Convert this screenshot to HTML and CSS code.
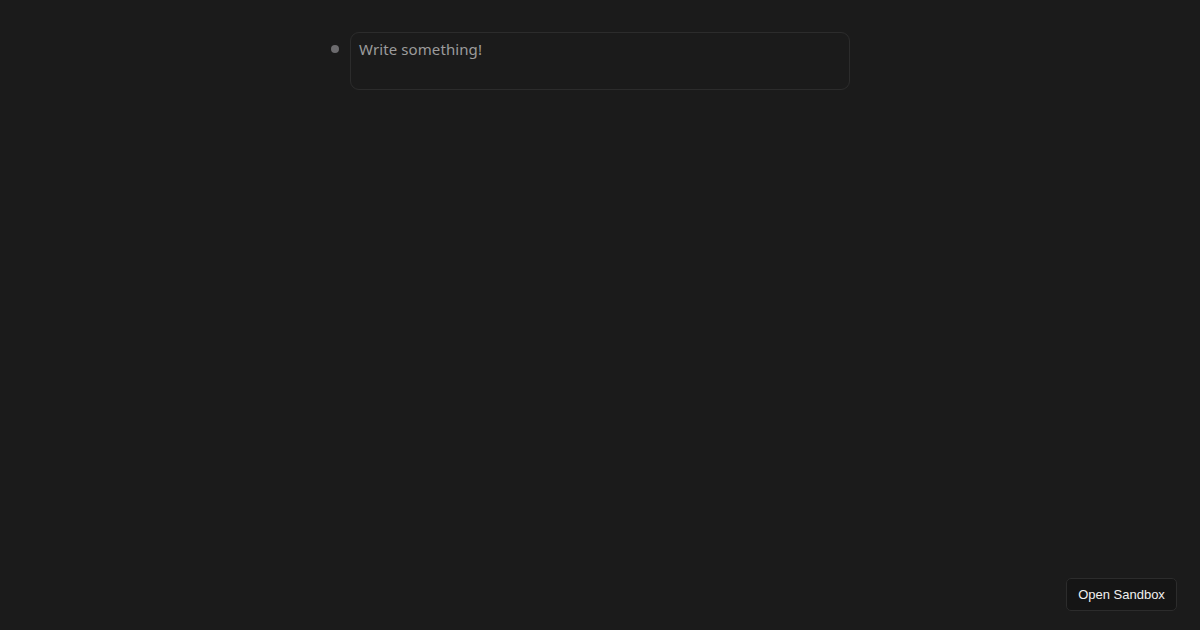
FILE: index.html
```html
<!DOCTYPE html>
<html>
<head>
<meta charset="utf-8">
<link rel="stylesheet" href="styles.css">
</head>
<body>
<main class="page">
  <div class="editor">
    <ul class="list">
      <li class="item">
        <span class="bullet"></span>
        <div class="block">Write something!</div>
      </li>
    </ul>
  </div>
</main>
<button class="sandbox">Open Sandbox</button>
</body>
</html>
```

FILE: styles.css
```css
html, body {
  margin: 0;
  padding: 0;
  background: #1b1b1b;
  height: 100%;
}
body {
  font-family: "Noto Sans", "Liberation Sans", sans-serif;
}
.page {
  display: flex;
  justify-content: center;
  padding-top: 32px;
}
.editor {
  width: 520px;
  margin-left: -20px;
}
.list {
  list-style: none;
  margin: 0;
  padding: 0;
}
.item {
  display: flex;
  align-items: flex-start;
}
.bullet {
  width: 8px;
  height: 8px;
  border-radius: 50%;
  background: #6c6b6e;
  margin: 13px 11px 0 1px;
  flex: none;
}
.block {
  flex: 1;
  box-sizing: border-box;
  height: 58px;
  border: 1px solid #2c2c2c;
  border-radius: 9px;
  padding: 5px 8px;
  color: #9c9c9c;
  font-size: 15px;
  line-height: 22px;
  letter-spacing: 0.1px;
}
.sandbox {
  position: fixed;
  right: 23px;
  bottom: 19px;
  box-sizing: border-box;
  width: 111px;
  height: 33px;
  background: #151515;
  border: 1px solid #2c2c2c;
  border-radius: 5px;
  color: #f0f0f0;
  font-family: "Liberation Sans", Arial, sans-serif;
  font-size: 13px;
  padding: 0;
}
```
